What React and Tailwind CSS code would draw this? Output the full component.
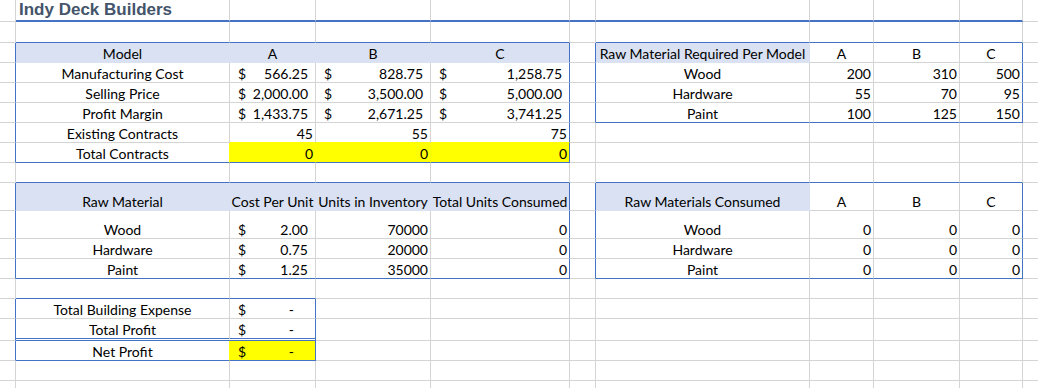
import React from "react";

// spreadsheet geometry (px) — matches the sheet's column widths / row heights
const GRID_COLS =
  "grid-cols-[16px_214px_86px_115px_139px_26px_214px_64px_86px_63px_60px]";
const GRID_ROWS =
  "grid-rows-[22px_21px_20px_20px_20px_20px_20px_20px_20px_28px_28px_20px_20px_20px_20px_22px_20px_20px_20px]";
const NROWS = 19;
const NCOLS = 11;

const RIGHT = {
  blue: "border-r-[#4472c4]",
  gray: "border-r-[#d4d4d4]",
  shade: "border-r-[#d9e1f2]",
  yellow: "border-r-[#ffff00]",
};
const BOTTOM = {
  blue: "border-b-[#4472c4]",
  gray: "border-b-[#d4d4d4]",
  shade: "border-b-[#d9e1f2]",
  yellow: "border-b-[#ffff00]",
};
const FILL = { shade: "bg-[#d9e1f2]", yellow: "bg-[#ffff00]" };

const mid = (v, fill) => ({ kind: "mid", v, fill });
const num = (v, fill) => ({ kind: "num", v, fill });
const acct = (v) => ({ kind: "acct", v });
const dash = (fill) => ({ kind: "dash", fill });

// cells[row][col]
const cells = {
  0: { 1: { kind: "title", v: "Indy Deck Builders" } },
  2: {
    1: mid("Model", "shade"),
    2: mid("A", "shade"),
    3: mid("B", "shade"),
    4: mid("C", "shade"),
    6: mid("Raw Material Required Per Model", "shade"),
    7: mid("A"),
    8: mid("B"),
    9: mid("C"),
  },
  3: {
    1: mid("Manufacturing Cost"),
    2: acct("566.25"),
    3: acct("828.75"),
    4: acct("1,258.75"),
    6: mid("Wood"),
    7: num("200"),
    8: num("310"),
    9: num("500"),
  },
  4: {
    1: mid("Selling Price"),
    2: acct("2,000.00"),
    3: acct("3,500.00"),
    4: acct("5,000.00"),
    6: mid("Hardware"),
    7: num("55"),
    8: num("70"),
    9: num("95"),
  },
  5: {
    1: mid("Profit Margin"),
    2: acct("1,433.75"),
    3: acct("2,671.25"),
    4: acct("3,741.25"),
    6: mid("Paint"),
    7: num("100"),
    8: num("125"),
    9: num("150"),
  },
  6: {
    1: mid("Existing Contracts"),
    2: num("45"),
    3: num("55"),
    4: num("75"),
  },
  7: {
    1: mid("Total Contracts"),
    2: num("0", "yellow"),
    3: num("0", "yellow"),
    4: num("0", "yellow"),
  },
  9: {
    1: mid("Raw Material", "shade"),
    2: mid("Cost Per Unit", "shade"),
    3: mid("Units in Inventory", "shade"),
    4: mid("Total Units Consumed", "shade"),
    6: mid("Raw Materials Consumed", "shade"),
    7: mid("A"),
    8: mid("B"),
    9: mid("C"),
  },
  10: {
    1: mid("Wood"),
    2: acct("2.00"),
    3: num("70000"),
    4: num("0"),
    6: mid("Wood"),
    7: num("0"),
    8: num("0"),
    9: num("0"),
  },
  11: {
    1: mid("Hardware"),
    2: acct("0.75"),
    3: num("20000"),
    4: num("0"),
    6: mid("Hardware"),
    7: num("0"),
    8: num("0"),
    9: num("0"),
  },
  12: {
    1: mid("Paint"),
    2: acct("1.25"),
    3: num("35000"),
    4: num("0"),
    6: mid("Paint"),
    7: num("0"),
    8: num("0"),
    9: num("0"),
  },
  14: { 1: mid("Total Building Expense"), 2: dash() },
  15: { 1: mid("Total Profit"), 2: dash() },
  16: { 1: mid("Net Profit"), 2: dash("yellow") },
};

// blue table outlines
const hBlue = new Set();
const vBlue = new Set();
function box(r0, r1, c0, c1) {
  for (let c = c0; c <= c1; c++) {
    hBlue.add(`${r0 - 1},${c}`);
    hBlue.add(`${r1},${c}`);
  }
  for (let r = r0; r <= r1; r++) {
    vBlue.add(`${r},${c0 - 1}`);
    vBlue.add(`${r},${c1}`);
  }
}
box(2, 7, 1, 4);
box(2, 5, 6, 9);
box(9, 12, 1, 4);
box(9, 12, 6, 9);
box(14, 15, 1, 2);
box(16, 16, 1, 2);

const fillAt = (r, c) => cells[r]?.[c]?.fill;

function Cell({ r, c }) {
  const cell = cells[r]?.[c];
  const fill = cell?.fill;

  let right = "gray";
  if (vBlue.has(`${r},${c}`)) right = "blue";
  else if (fill) right = fill;
  else if (fillAt(r, c + 1)) right = fillAt(r, c + 1);

  let bottom = "gray";
  if (hBlue.has(`${r},${c}`)) bottom = "blue";
  else if (fill) bottom = fill;
  else if (fillAt(r + 1, c)) bottom = fillAt(r + 1, c);

  let bw = "border-b";
  if (r === 0 && c >= 1 && c <= 9) {
    bw = "border-b-2";
    bottom = "blue";
  }
  if (r === 15 && (c === 1 || c === 2)) {
    bw = "border-b-[3px] border-double";
  }

  const base = `min-w-0 border-r ${bw} ${RIGHT[right]} ${BOTTOM[bottom]} ${
    fill ? FILL[fill] : ""
  }`;

  if (!cell) return <div className={base} />;

  if (cell.kind === "title") {
    return (
      <div className={`${base} flex items-start pl-[3px] overflow-visible`}>
        <span className="whitespace-nowrap font-['Liberation_Sans',Arial,sans-serif] text-[17px] leading-[20px] font-bold text-[#44546a]">
          {cell.v}
        </span>
      </div>
    );
  }
  if (cell.kind === "mid") {
    return (
      <div className={`${base} flex items-end justify-center`}>
        <span className="whitespace-nowrap">{cell.v}</span>
      </div>
    );
  }
  if (cell.kind === "num") {
    return (
      <div className={`${base} flex items-end justify-end pr-[2px]`}>
        <span className="whitespace-nowrap">{cell.v}</span>
      </div>
    );
  }
  if (cell.kind === "acct") {
    return (
      <div className={`${base} flex items-end justify-between pl-[8px] pr-[7px]`}>
        <span>$</span>
        <span className="whitespace-nowrap">{cell.v}</span>
      </div>
    );
  }
  // accounting zero: "$   -  "
  return (
    <div className={`${base} flex items-end justify-between pl-[8px] pr-[21px]`}>
      <span>$</span>
      <span>-</span>
    </div>
  );
}

export default function App() {
  const all = [];
  for (let r = 0; r < NROWS; r++) {
    for (let c = 0; c < NCOLS; c++) {
      all.push(<Cell key={`${r}-${c}`} r={r} c={c} />);
    }
  }

  return (
    <div className="w-[1038px] h-[388px] overflow-hidden bg-white font-[Lato,sans-serif] text-[14px] leading-4 text-black">
      <div className={`grid ${GRID_COLS} ${GRID_ROWS}`}>{all}</div>
    </div>
  );
}
